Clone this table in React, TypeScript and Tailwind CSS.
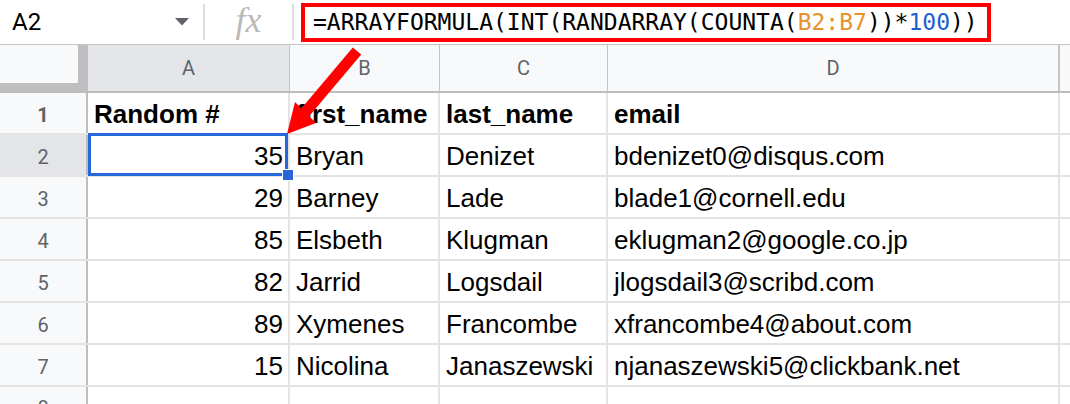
import React from "react";

const rows: [string, string, string, string][] = [
  ["35", "Bryan", "Denizet", "bdenizet0@disqus.com"],
  ["29", "Barney", "Lade", "blade1@cornell.edu"],
  ["85", "Elsbeth", "Klugman", "eklugman2@google.co.jp"],
  ["82", "Jarrid", "Logsdail", "jlogsdail3@scribd.com"],
  ["89", "Xymenes", "Francombe", "xfrancombe4@about.com"],
  ["15", "Nicolina", "Janaszewski", "njanaszewski5@clickbank.net"],
];

const cell =
  "h-full flex items-center pt-[3px] border-r-2 border-[#e3e3e3] px-[6px] whitespace-nowrap overflow-hidden";

function TopBar() {
  return (
    <div className="flex h-[45px] border-b border-[#c4c4c4] items-center">
      <div className="w-[203px] h-full flex items-center pl-[12px] pr-[14px] justify-between">
        <span className="text-[24px] text-black font-['Roboto',sans-serif]">A2</span>
        <svg width="14" height="8" viewBox="0 0 14 8">
          <path d="M0 0 L14 0 L7 7.5 Z" fill="#5f6368" />
        </svg>
      </div>
      <div className="w-[2px] h-[36px] bg-[#dadce0]" />
      <div className="w-[87px] h-full flex items-center justify-center">
        <span className="text-[36px] italic text-[#b9b9b9] font-['Liberation_Serif',serif] leading-none -mt-[4px]">
          fx
        </span>
      </div>
      <div className="w-[2px] h-[36px] bg-[#dadce0]" />
      <div className="ml-[7px] w-[690px] h-[39px] border-4 border-[#ff0000] flex items-center pl-[8px] text-[23px] text-black font-['DejaVu_Sans_Mono',monospace] whitespace-nowrap">
        =ARRAYFORMULA(INT(RANDARRAY(COUNTA(
        <span className="text-[#e8912d]">B2:B7</span>
        ))*
        <span className="text-[#1b5fd0]">100</span>
        ))
      </div>
    </div>
  );
}

function ColHeaders() {
  const h =
    "h-full flex items-center justify-center border-r border-[#c4c4c4] text-[20px] text-[#5f6368] font-['Roboto',sans-serif]";
  return (
    <div className="flex h-[48px] border-b-2 border-[#bdbdbd]">
      <div className="w-[88px] h-full bg-[#bfbfbf] shrink-0">
        <div className="w-[78px] h-[38px] bg-[#f8f9fa]" />
      </div>
      <div className={`${h} w-[202px] bg-[#e3e5e8] shrink-0`}>A</div>
      <div className={`${h} w-[150px] bg-[#f8f9fa] shrink-0`}>B</div>
      <div className={`${h} w-[168px] bg-[#f8f9fa] shrink-0`}>C</div>
      <div className={`${h} w-[452px] bg-[#f8f9fa] border-r-2 shrink-0`}>D</div>
      <div className="flex-1 h-full bg-[#f8f9fa]" />
    </div>
  );
}

function RowHeader({ n, active }: { n: number; active?: boolean }) {
  return (
    <div
      className={`w-[88px] h-full shrink-0 flex items-center justify-center pt-[3px] border-r-2 border-[#bdbdbd] text-[20px] text-[#5f6368] font-['Roboto',sans-serif] ${
        active ? "bg-[#e3e5e8]" : "bg-[#f8f9fa]"
      }`}
    >
      {n}
    </div>
  );
}

export default function App() {
  return (
    <div className="relative w-[1070px] h-[404px] overflow-hidden bg-white font-['Liberation_Sans',Arial,sans-serif]">
      <TopBar />
      <ColHeaders />
      <div className="text-[26px] text-black">
        <div className="flex h-[42px] border-b-2 border-[#e3e3e3] font-bold">
          <RowHeader n={1} />
          <div className={`${cell} w-[202px] shrink-0`}>Random #</div>
          <div className={`${cell} w-[150px] shrink-0`}>first_name</div>
          <div className={`${cell} w-[168px] shrink-0`}>last_name</div>
          <div className={`${cell} w-[452px] shrink-0`}>email</div>
          <div className="flex-1" />
        </div>
        {rows.map((r, i) => (
          <div key={i} className="flex h-[42px] border-b-2 border-[#e3e3e3]">
            <RowHeader n={i + 2} active={i === 0} />
            <div className={`${cell} w-[202px] shrink-0 justify-end pr-[5px] relative overflow-visible`}>
              {r[0]}
              {i === 0 && (
                <>
                  <div className="absolute left-0 -top-[2px] w-[200px] h-[43px] border-[3px] border-[#2766d8]" />
                  <div className="absolute -right-[6px] bottom-[-6px] w-[12px] h-[12px] bg-[#2766d8] border border-white z-10" />
                </>
              )}
            </div>
            <div className={`${cell} w-[150px] shrink-0`}>{r[1]}</div>
            <div className={`${cell} w-[168px] shrink-0`}>{r[2]}</div>
            <div className={`${cell} w-[452px] shrink-0`}>{r[3]}</div>
            <div className="flex-1" />
          </div>
        ))}
        <div className="flex h-[42px]">
          <div className="w-[88px] h-full shrink-0 flex justify-center pt-[6px] border-r-2 border-[#bdbdbd] bg-[#f8f9fa] text-[20px] text-[#5f6368] font-['Roboto',sans-serif]">
            8
          </div>
          <div className="w-[202px] h-full border-r-2 border-[#e3e3e3] shrink-0" />
          <div className="w-[150px] h-full border-r-2 border-[#e3e3e3] shrink-0" />
          <div className="w-[168px] h-full border-r-2 border-[#e3e3e3] shrink-0" />
          <div className="w-[452px] h-full border-r-2 border-[#e3e3e3] shrink-0" />
        </div>
      </div>
      <svg
        className="absolute inset-0 pointer-events-none"
        width="1070"
        height="404"
        viewBox="0 0 1070 404"
      >
        <line x1="357" y1="51" x2="303" y2="115" stroke="#ff0000" strokeWidth="11" />
        <polygon points="287,134 295,102 316,123" fill="#ff0000" />
      </svg>
    </div>
  );
}
